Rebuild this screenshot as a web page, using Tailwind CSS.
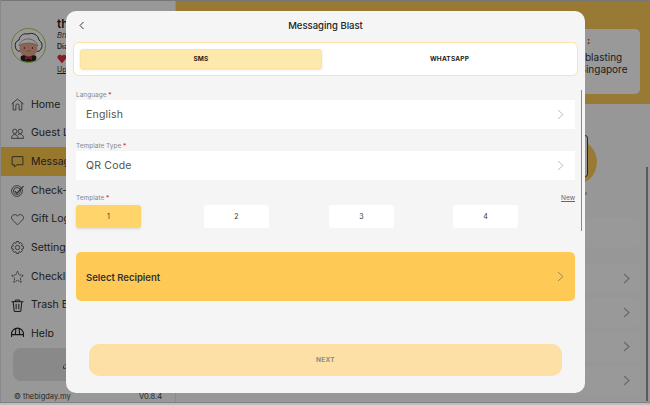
<!DOCTYPE html>
<html>
<head>
<meta charset="utf-8">
<script src="https://cdn.jsdelivr.net/npm/@tailwindcss/browser@4"></script>
</head>
<body class="m-0 overflow-hidden">
<div class="relative w-[650px] h-[405px] overflow-hidden bg-white font-['Inter','Roboto',sans-serif] flex">
  <aside class="w-[176px] h-full shrink-0 bg-[#fdfdfd] flex flex-col border-r border-[#e8e8e8]">
    <div class="flex gap-[11px] pl-[11px] pt-[17px] h-[90px] shrink-0">
      <svg class="mt-[11px] w-[35px] h-[35px] shrink-0" viewBox="0 0 35 35"><circle cx="17.5" cy="17.5" r="17" fill="#fff" stroke="#a9d04c" stroke-width="1"/><path d="M5 21c-2-5 0-8 3-9 1-5 5-7 9-6 5-2 10 1 11 6 3 2 4 6 2 9-1 2-3 3-4 2H8c-1 1-2-1-3-2z" fill="#fff" stroke="#222" stroke-width=".9"/><ellipse cx="17.5" cy="20" rx="9" ry="9.500" fill="#e9a68e"/><path d="M8 18c1-5 5-7 9-7s8 2 10 7c-4-4-15-4-19 0z" fill="#fff" stroke="#666" stroke-width=".5"/><circle cx="13.500" cy="20" r=".7" fill="#222"/><circle cx="21.500" cy="20" r=".7" fill="#222"/><path d="M15.500 23h4" stroke="#a06050" stroke-width=".6"/><path d="M10 28c2-1 4-1 5 0 2 1 3 1 5 0 2-1 4-1 5 0 1 2 0 5-2 5-3 1-8 1-11 0-2 0-3-3-2-5z" fill="#222"/><path d="M14 28l3.500 1.500L21 28v4l-3.500-1.500L14 32z" fill="#d8252e"/></svg>
      <div class="flex flex-col">
        <div class="text-[12px] leading-[13px] font-semibold text-[#222]">thebigday</div>
        <div class="text-[7.500px] leading-[11px] italic text-[#333]">Bride</div>
        <div class="text-[7px] leading-[11px] font-semibold text-[#333]">Diamond</div>
        <svg class="w-[10px] h-[10px] mt-[2px]" viewBox="0 0 24 24"><path fill="#e02f3c" d="M12 22 2 11C-1 6 3 2 7 2c2 0 4 1 5 3 1-2 3-3 5-3 4 0 8 4 5 9z"/></svg>
        <div class="text-[7px] leading-[10px] underline text-[#333] mt-[1px]">Upgrade</div>
      </div>
    </div>
    <nav class="h-[247px] shrink-0 overflow-hidden flex flex-col text-[10.500px] text-[#333]">
      <div class="h-[28.700px] shrink-0 flex items-center gap-[7px] pl-[11px]"><svg class="w-[13px] h-[13px]" viewBox="0 0 24 24" fill="none" stroke="#444" stroke-width="1.500"><path d="M1 11 12 2l11 9M4 9v13h5v-8a3 3 0 0 1 6 0v8h5V9"/></svg><span class="pt-[1px]">Home</span></div>
      <div class="h-[28.700px] shrink-0 flex items-center gap-[7px] pl-[11px]"><svg class="w-[13px] h-[13px]" viewBox="0 0 24 24" fill="none" stroke="#444" stroke-width="1.500"><circle cx="7" cy="8" r="4"/><circle cx="17" cy="8" r="4"/><path d="M1 21c0-5 3-7 6-7s6 2 6 7zM13 14c1-1 3-1 4-1 3 0 6 3 6 8H13"/></svg><span>Guest List</span></div>
      <div class="h-[28.700px] shrink-0 flex items-center gap-[7px] pl-[11px] bg-[#fec84b]"><svg class="w-[13px] h-[13px]" viewBox="0 0 24 24" fill="none" stroke="#444" stroke-width="1.700"><path d="M2 3h20v15H11l-5 4v-4H2z"/><path d="M7.500 10.500h.01M12 10.500h.01M16.500 10.500h.01" stroke-width="2.600"/></svg><span>Messaging</span></div>
      <div class="h-[28.700px] shrink-0 flex items-center gap-[7px] pl-[11px]"><svg class="w-[13px] h-[13px]" viewBox="0 0 24 24" fill="none" stroke="#444" stroke-width="1.500"><circle cx="11" cy="13" r="10"/><circle cx="11" cy="13" r="6.500"/><path d="m7 13 4 4L23 4" stroke-width="2"/></svg><span>Check-in</span></div>
      <div class="h-[28.700px] shrink-0 flex items-center gap-[7px] pl-[11px]"><svg class="w-[13px] h-[13px]" viewBox="0 0 24 24" fill="none" stroke="#444" stroke-width="1.500"><path d="M12 22 2 12C-1 7 3 3 7 3c2 0 4 1 5 3 1-2 3-3 5-3 4 0 8 4 5 9z"/></svg><span>Gift Log</span></div>
      <div class="h-[28.700px] shrink-0 flex items-center gap-[7px] pl-[11px]"><svg class="w-[13px] h-[13px]" viewBox="0 0 24 24" fill="none" stroke="#444" stroke-width="1.500"><circle cx="12" cy="12" r="4"/><path d="m10 1h4l1 3.500 3-1.500 3 3-1.500 3 3.500 1v4l-3.500 1 1.500 3-3 3-3-1.500-1 3.500h-4l-1-3.500-3 1.500-3-3 1.500-3L1 14v-4l3.500-1L3 6l3-3 3 1.500z"/></svg><span>Settings</span></div>
      <div class="h-[28.700px] shrink-0 flex items-center gap-[7px] pl-[11px]"><svg class="w-[13px] h-[13px]" viewBox="0 0 24 24" fill="none" stroke="#444" stroke-width="1.500" stroke-dasharray="3 1"><path d="m12 2 3 7 8 1-6 5 2 8-7-4-7 4 2-8-6-5 8-1z"/></svg><span>Checklist</span></div>
      <div class="h-[28.700px] shrink-0 flex items-center gap-[7px] pl-[11px]"><svg class="w-[13px] h-[13px]" viewBox="0 0 24 24" fill="none" stroke="#222" stroke-width="1.800"><path d="M1 5h22M8 5V2h8v3M4 5l2 18h12l2-18M9.500 9v10M14.500 9v10"/></svg><span>Trash Bin</span></div>
      <div class="h-[28.700px] shrink-0 flex items-center gap-[7px] pl-[11px]"><svg class="w-[13px] h-[13px]" viewBox="0 0 24 24" fill="none" stroke="#222" stroke-width="2"><path d="M1 20v-7a11 11 0 0 1 22 0v7zM1 14h22M8 14 9 3M16 14 15 3"/></svg><span>Help</span></div>
    </nav>
    <div class="ml-[13px] mt-[11px] h-[33px] w-[150px] shrink-0 rounded-[8px] bg-[#e5e5e5] flex items-center pl-[49px]"><svg class="w-[9px] h-[10px]" viewBox="0 0 24 24" fill="none" stroke="#333" stroke-width="2"><path d="M4 14v7h16v-7M12 3v12M8 10l4 5 4-5"/></svg></div>
    <div class="flex justify-between pl-[14px] pr-[13px] mt-[10px] text-[7.500px] leading-[12px] text-[#444]"><span>© thebigday.my</span><span>V0.8.4</span></div>
  </aside>
  <main class="flex-1 h-full flex flex-col bg-[#fcfcfc]">
    <div class="h-[104px] shrink-0 bg-[#ffcb57] flex justify-end pt-[29px] pr-[10px]">
      <div class="w-[180px] h-[65px] rounded-[5px] bg-white pl-[125px] pt-[5px] flex flex-col text-[10px] leading-[12px] text-[#333] whitespace-nowrap">
        <span class="ml-[2px] text-[#e02020] font-bold">:</span>
        <span class="mt-[5px]">blasting</span>
        <span class="-ml-[5.500px]">Singapore</span>
      </div>
    </div>
    <div class="flex-1 flex flex-col pt-[114px] px-[10px] gap-[5px]">
      <div class="h-[29px] shrink-0 bg-white rounded-[4px] mb-[12px]"></div>
      <div class="h-[29px] shrink-0 bg-white rounded-[4px] flex items-center justify-end pr-[10px]"><svg class="w-[7px] h-[11px]" viewBox="0 0 7 11" fill="none" stroke="#b0b0b0" stroke-width="1.200"><path d="m1 1 5 4.500L1 10"/></svg></div>
      <div class="h-[29px] shrink-0 bg-white rounded-[4px] flex items-center justify-end pr-[10px]"><svg class="w-[7px] h-[11px]" viewBox="0 0 7 11" fill="none" stroke="#b0b0b0" stroke-width="1.200"><path d="m1 1 5 4.500L1 10"/></svg></div>
      <div class="h-[29px] shrink-0 bg-white rounded-[4px] flex items-center justify-end pr-[10px]"><svg class="w-[7px] h-[11px]" viewBox="0 0 7 11" fill="none" stroke="#b0b0b0" stroke-width="1.200"><path d="m1 1 5 4.500L1 10"/></svg></div>
      <div class="h-[29px] shrink-0 bg-white rounded-[4px] flex items-center justify-end pr-[10px]"><svg class="w-[7px] h-[11px]" viewBox="0 0 7 11" fill="none" stroke="#b0b0b0" stroke-width="1.200"><path d="m1 1 5 4.500L1 10"/></svg></div>
    </div>
  </main>

  <div class="absolute left-[551px] top-[139px] w-[46px] h-[46px] rounded-full bg-[#ffcb57]"></div>
  <div class="absolute left-[575px] top-[135px] w-[13px] h-[42px] rounded-[3px] border border-[#444] bg-[#fcfcfc]"></div>
  <div class="absolute left-[585px] top-[192px] w-[2px] h-[3px] bg-[#c4c4c4]"></div>

  <div class="absolute inset-0 bg-black/40"></div>

  <div class="absolute inset-x-0 top-0 h-[1px] bg-[#777]"></div>
  <div class="absolute inset-y-0 left-0 w-[1px] bg-[#888]"></div>
  <div class="absolute inset-x-0 bottom-[2px] h-[1px] bg-[#808080]"></div>
  <div class="absolute inset-x-0 bottom-0 h-[2px] bg-[#bdbdbd]"></div>
  <div class="absolute left-[646px] top-[167px] w-[1.500px] h-[234px] bg-[#5a5a5a]"></div>

  <div class="absolute left-[66px] top-[11px] w-[519px] h-[382px] rounded-[10px] bg-[#f5f5f5] px-[7px] flex flex-col">
    <div class="relative h-[31px] shrink-0 flex items-center justify-center text-[9.500px] font-medium text-[#222]">
      <svg class="absolute left-[6px] top-[10px] w-[6px] h-[9px]" viewBox="0 0 6 9" fill="none" stroke="#333" stroke-width="1"><path d="M4.500 1 1 4.500 4.500 8"/></svg>
      <span>Messaging Blast</span>
    </div>
    <div class="shrink-0 h-[34px] w-[505px] rounded-[6px] border border-[#fde3a7] bg-white flex items-center pl-[6px] text-[6.500px] font-bold tracking-[0.2px] text-[#222]">
      <div class="w-[242px] h-[20px] pt-[1px] rounded-[3px] bg-[#fee9ad] border border-[#fde3a0] shadow-sm flex items-center justify-center">SMS</div>
      <div class="flex-1 pt-[1px] flex items-center justify-center">WHATSAPP</div>
    </div>
    <div class="relative flex-1 px-[3px]">
      <div class="absolute -right-[4px] top-[14px] w-[1.500px] h-[141px] bg-[#8a8a8a]"></div>
      <div class="text-[6.500px] leading-[8px] text-[#888] mt-[15px]">Language <span class="text-[#e02020]">*</span></div>
      <div class="mt-[1px] w-[499px] h-[29px] bg-white flex items-center justify-between pl-[10px] pr-[11px] text-[10.500px] tracking-[0.2px] text-[#55534c]"><span>English</span><svg class="w-[7px] h-[11px]" viewBox="0 0 7 11" fill="none" stroke="#c0c0b8" stroke-width="1"><path d="m1 1 5 4.500L1 10"/></svg></div>
      <div class="text-[6.500px] leading-[8px] text-[#888] mt-[13px]">Template Type <span class="text-[#e02020]">*</span></div>
      <div class="mt-[1px] w-[499px] h-[29px] bg-white flex items-center justify-between pl-[10px] pr-[11px] text-[10.500px] tracking-[0.2px] text-[#55534c]"><span>QR Code</span><svg class="w-[7px] h-[11px]" viewBox="0 0 7 11" fill="none" stroke="#c0c0b8" stroke-width="1"><path d="m1 1 5 4.500L1 10"/></svg></div>
      <div class="w-[499px] flex justify-between items-end mt-[14px] text-[6.500px] leading-[8px]"><span class="text-[#888]">Template <span class="text-[#e02020]">*</span></span><span class="underline text-[#666]">New</span></div>
      <div class="mt-[3px] w-[499px] flex text-[7px] text-[#333]">
        <div class="w-[65px] h-[23px] pt-[1px] rounded-[3px] bg-[#ffd56b] shadow-sm flex items-center justify-center">1</div>
        <div class="ml-[63px] w-[65px] h-[23px] pt-[1px] rounded-[3px] bg-white flex items-center justify-center">2</div>
        <div class="ml-[60px] w-[65px] h-[23px] pt-[1px] rounded-[3px] bg-white flex items-center justify-center">3</div>
        <div class="ml-[59px] w-[65px] h-[23px] pt-[1px] rounded-[3px] bg-white flex items-center justify-center">4</div>
      </div>
      <div class="mt-[24px] w-[499px] h-[49px] rounded-[5px] bg-[#fec955] flex items-center justify-between pl-[10px] pr-[11px] text-[9.500px] font-semibold text-[#333]"><span class="pt-[3px]">Select Recipient</span><svg class="w-[7px] h-[11px]" viewBox="0 0 7 11" fill="none" stroke="#a38a4c" stroke-width="1"><path d="m1 1 5 4.500L1 10"/></svg></div>
      <div class="mt-[43px] ml-[13px] w-[473px] h-[32px] pt-[1px] rounded-[10px] bg-[#fce0a6] flex items-center justify-center text-[6.500px] font-bold tracking-[0.3px] text-[#8f8c80]">NEXT</div>
    </div>
  </div>
</div>
</body>
</html>
